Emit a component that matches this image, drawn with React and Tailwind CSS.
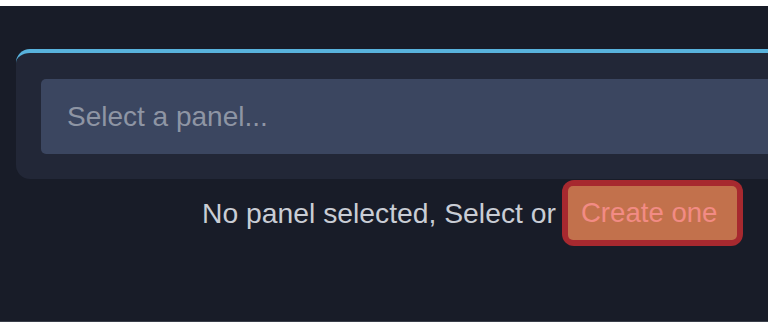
export default function App() {
  return (
    <div
      className="w-[768px] h-[322px] overflow-hidden flex flex-col bg-[#181c28]"
      style={{ fontFamily: '"Liberation Sans", Arial, sans-serif' }}
    >
      <div className="h-[6px] shrink-0 bg-white" />
      <div className="flex-1 flex flex-col pt-[43px] pl-[16px]">
        <div className="w-[900px] shrink-0 rounded-[14px] border-t-[4px] border-[#58b2dc] bg-[#222737] pt-[26px] pb-[25px] px-[25px]">
          <div className="h-[75px] rounded-[5px] bg-[#3b4660] flex items-center pl-[26px]">
            <span className="text-[28px] leading-[32px] text-[#8e95a4]">Select a panel...</span>
          </div>
        </div>
        <div className="flex items-center mt-[1px] pl-[186px]">
          <span className="text-[28.3px] leading-[32px] text-[#c9cdd5]">No panel selected, Select or</span>
          <span className="ml-[6px] rounded-[12px] bg-[#a7292f] p-[6px] flex">
            <span className="rounded-[5px] bg-[#c2714c] pl-[13px] pr-[20px] py-[10px] text-[27.6px] leading-[34px] text-[#f28b84]">
              Create one
            </span>
          </span>
        </div>
      </div>
      <div className="h-[1px] shrink-0 bg-[#3a3f4a]" />
    </div>
  );
}
